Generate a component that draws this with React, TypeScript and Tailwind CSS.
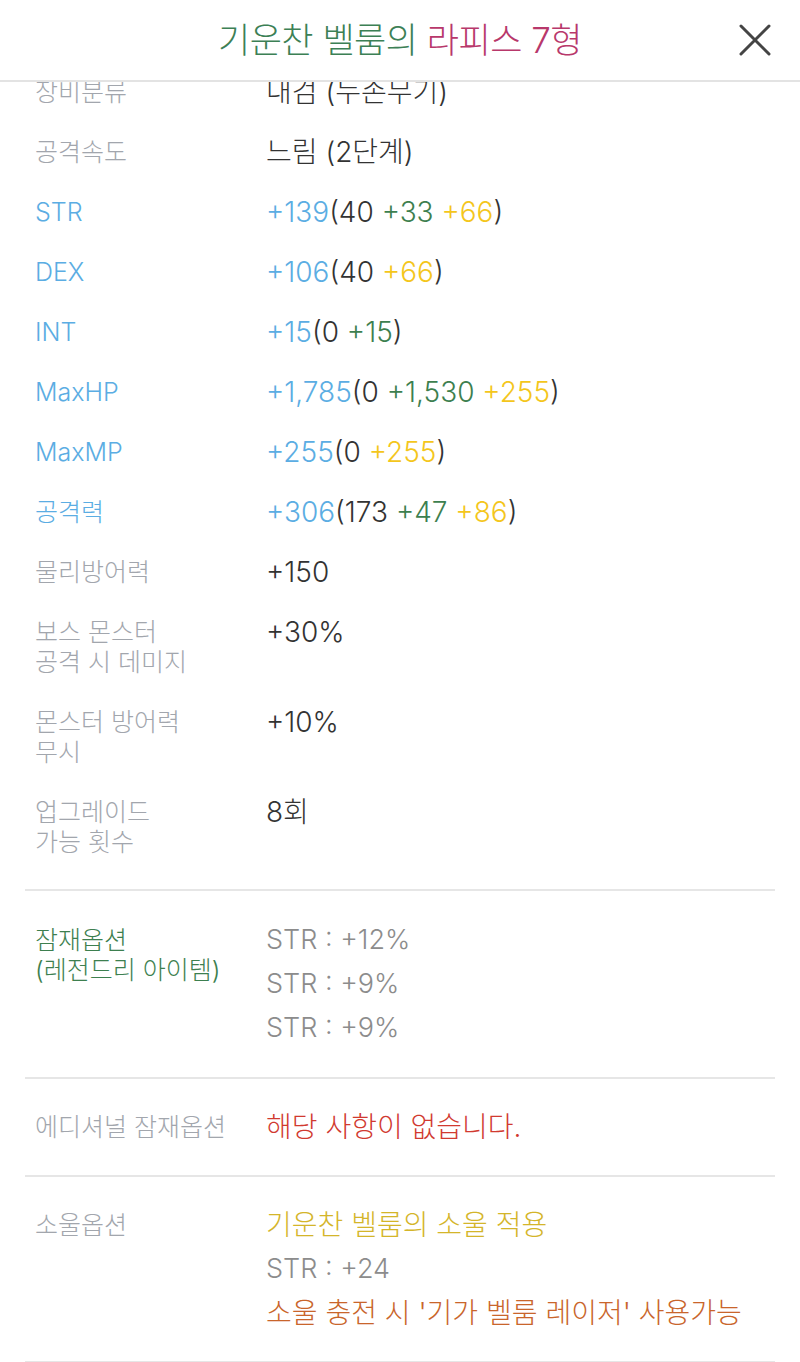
import React from "react";

type Part = { t: string; c: string };

const DARK = "text-[#333]";
const BLUE = "text-[#5badE3]";
const GREEN = "text-[#3d7f4f]";
const YELLOW = "text-[#f4c61c]";
const GREY = "text-[#a2a6ad]";

const stats: { label: string[]; labelColor: string; value: Part[] }[] = [
  { label: ["장비분류"], labelColor: GREY, value: [{ t: "내검 (누손무기)", c: DARK }] },
  { label: ["공격속도"], labelColor: GREY, value: [{ t: "느림 (2단계)", c: DARK }] },
  {
    label: ["STR"],
    labelColor: BLUE,
    value: [
      { t: "+139", c: BLUE },
      { t: "(40 ", c: DARK },
      { t: "+33 ", c: GREEN },
      { t: "+66", c: YELLOW },
      { t: ")", c: DARK },
    ],
  },
  {
    label: ["DEX"],
    labelColor: BLUE,
    value: [
      { t: "+106", c: BLUE },
      { t: "(40 ", c: DARK },
      { t: "+66", c: YELLOW },
      { t: ")", c: DARK },
    ],
  },
  {
    label: ["INT"],
    labelColor: BLUE,
    value: [
      { t: "+15", c: BLUE },
      { t: "(0 ", c: DARK },
      { t: "+15", c: GREEN },
      { t: ")", c: DARK },
    ],
  },
  {
    label: ["MaxHP"],
    labelColor: BLUE,
    value: [
      { t: "+1,785", c: BLUE },
      { t: "(0 ", c: DARK },
      { t: "+1,530 ", c: GREEN },
      { t: "+255", c: YELLOW },
      { t: ")", c: DARK },
    ],
  },
  {
    label: ["MaxMP"],
    labelColor: BLUE,
    value: [
      { t: "+255", c: BLUE },
      { t: "(0 ", c: DARK },
      { t: "+255", c: YELLOW },
      { t: ")", c: DARK },
    ],
  },
  {
    label: ["공격력"],
    labelColor: BLUE,
    value: [
      { t: "+306", c: BLUE },
      { t: "(173 ", c: DARK },
      { t: "+47 ", c: GREEN },
      { t: "+86", c: YELLOW },
      { t: ")", c: DARK },
    ],
  },
  { label: ["물리방어력"], labelColor: GREY, value: [{ t: "+150", c: DARK }] },
  { label: ["보스 몬스터", "공격 시 데미지"], labelColor: GREY, value: [{ t: "+30%", c: DARK }] },
  { label: ["몬스터 방어력", "무시"], labelColor: GREY, value: [{ t: "+10%", c: DARK }] },
  { label: ["업그레이드", "가능 횟수"], labelColor: GREY, value: [{ t: "8회", c: DARK }] },
];

export default function App() {
  return (
    <div className="w-[800px] h-[1362px] bg-white overflow-hidden flex flex-col font-['Inter','Noto_Sans_CJK_KR',sans-serif] font-light">
      <header className="h-[82px] shrink-0 grid grid-cols-[1fr_auto_1fr] items-center border-b-2 border-[#e3e3e3] bg-white">
        <div />
        <h1 className="text-[35px] leading-none font-light tracking-[-0.5px]">
          <span className="text-[#3c8055]">기운찬 벨룸의 </span>
          <span className="text-[#b8386b]">라피스 7형</span>
        </h1>
        <div className="flex justify-end pr-[28px]">
          <svg width="34" height="34" viewBox="0 0 34 34" fill="none" stroke="#444" strokeWidth="3" strokeLinecap="round">
            <path d="M3 3 L31 31 M31 3 L3 31" />
          </svg>
        </div>
      </header>

      <div className="flex-1 overflow-hidden">
        <div className="-mt-[20px] px-[25px]">
          <div className="pb-[17px]">
            {stats.map((s, i) => (
              <div key={i} className="flex py-[15px] leading-[30px] pl-[10px]">
                <div className={`w-[231px] shrink-0 text-[25px] ${s.labelColor}`}>
                  {s.label.map((l, j) => (
                    <div key={j}>{l}</div>
                  ))}
                </div>
                <div className="text-[28px]">
                  {s.value.map((p, j) => (
                    <span key={j} className={p.c}>
                      {p.t}
                    </span>
                  ))}
                </div>
              </div>
            ))}
          </div>

          <div className="border-t-2 border-[#e6e6e6] flex py-[27px] pl-[10px]">
            <div className="w-[231px] shrink-0 text-[25px] text-[#3d7f4f] leading-[30px] pt-[7px]">
              <div>잠재옵션</div>
              <div>(레전드리 아이템)</div>
            </div>
            <div className="text-[27px] text-[#8c8c8c] leading-[44px]">
              <div>STR : +12%</div>
              <div>STR : +9%</div>
              <div>STR : +9%</div>
            </div>
          </div>

          <div className="border-t-2 border-[#e6e6e6] flex py-[26px] pl-[10px] leading-[44px]">
            <div className="w-[231px] shrink-0 text-[25px] text-[#a2a6ad]">에디셔널 잠재옵션</div>
            <div className="text-[28px] text-[#d13a30]">해당 사항이 없습니다.</div>
          </div>

          <div className="border-t-2 border-[#e6e6e6] flex py-[26px] pl-[10px] leading-[44px]">
            <div className="w-[231px] shrink-0 text-[25px] text-[#a2a6ad]">소울옵션</div>
            <div className="text-[28px]">
              <div className="text-[#d4b52a]">기운찬 벨룸의 소울 적용</div>
              <div className="text-[27px] text-[#8c8c8c]">STR : +24</div>
              <div className="text-[#c9652b]">소울 충전 시 '기가 벨룸 레이저' 사용가능</div>
            </div>
          </div>
          <div className="border-t-2 border-[#e6e6e6]" />
        </div>
      </div>
    </div>
  );
}
